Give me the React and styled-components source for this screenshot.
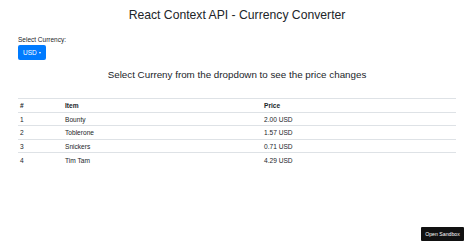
import React from "react";
import styled, { createGlobalStyle } from "styled-components";

const Global = createGlobalStyle`
  body {
    margin: 0;
    background: #fff;
    font-family: "Liberation Sans", Arial, sans-serif;
    color: #212529;
  }
`;

const Page = styled.div`
  width: 474px;
  height: 248px;
  position: relative;
  padding: 0 18px;
  box-sizing: border-box;
`;

const Title = styled.h1`
  margin: 0;
  padding-top: 8px;
  font-size: 12.2px;
  line-height: 14px;
  font-weight: 400;
  text-align: center;
`;

const Label = styled.div`
  margin-top: 14px;
  font-size: 6.5px;
  line-height: 8px;
`;

const DropButton = styled.button`
  display: flex;
  align-items: center;
  gap: 2px;
  margin-top: 1px;
  height: 15px;
  width: 28px;
  padding: 0 0 0 5px;
  border: none;
  border-radius: 2px;
  background: #007bff;
  color: #fff;
  font-family: inherit;
  font-size: 6.5px;
`;

const Caret = styled.span`
  width: 0;
  height: 0;
  border-left: 1.5px solid transparent;
  border-right: 1.5px solid transparent;
  border-top: 2px solid #fff;
`;

const Subtitle = styled.h3`
  margin: 9px 0 0;
  font-size: 9.8px;
  line-height: 12px;
  font-weight: 400;
  text-align: center;
`;

const Table = styled.table`
  margin-top: 17px;
  width: 438px;
  border-collapse: collapse;
  font-size: 6.6px;
`;

const Cell = styled.td`
  height: 13.6px;
  padding: 1px 2px 0;
  box-sizing: border-box;
  border-top: 1px solid #dee2e6;
  border-bottom: ${(p) => (p.$head ? "1px solid #dee2e6" : "none")};
  font-weight: ${(p) => (p.$head ? 700 : 400)};
  vertical-align: middle;
  text-align: left;
  width: ${(p) => p.$w || "auto"};
`;

const Sandbox = styled.div`
  position: absolute;
  right: 10px;
  bottom: 7px;
  width: 43px;
  height: 14px;
  display: flex;
  align-items: center;
  justify-content: center;
  background: #111;
  border-radius: 1px;
  color: #fff;
  font-size: 5.2px;
`;

const items = [
  ["1", "Bounty", "2.00 USD"],
  ["2", "Toblerone", "1.57 USD"],
  ["3", "Snickers", "0.71 USD"],
  ["4", "Tim Tam", "4.29 USD"],
];

export default function App() {
  return (
    <Page>
      <Global />
      <Title>React Context API - Currency Converter</Title>
      <Label>Select Currency:</Label>
      <DropButton>
        USD <Caret />
      </DropButton>
      <Subtitle>Select Curreny from the dropdown to see the price changes</Subtitle>
      <Table>
        <thead>
          <tr>
            <Cell as="th" $head $w="45px">#</Cell>
            <Cell as="th" $head $w="199px">Item</Cell>
            <Cell as="th" $head>Price</Cell>
          </tr>
        </thead>
        <tbody>
          {items.map(([n, name, price]) => (
            <tr key={n}>
              <Cell>{n}</Cell>
              <Cell>{name}</Cell>
              <Cell>{price}</Cell>
            </tr>
          ))}
        </tbody>
      </Table>
      <Sandbox>Open Sandbox</Sandbox>
    </Page>
  );
}
